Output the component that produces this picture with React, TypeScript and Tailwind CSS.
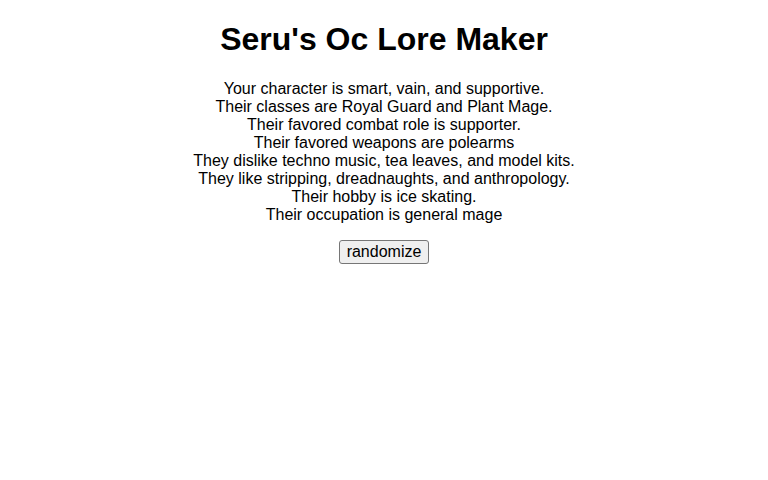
import { useState } from "react";

const lines = [
  "Your character is smart, vain, and supportive.",
  "Their classes are Royal Guard and Plant Mage.",
  "Their favored combat role is supporter.",
  "Their favored weapons are polearms",
  "They dislike techno music, tea leaves, and model kits.",
  "They like stripping, dreadnaughts, and anthropology.",
  "Their hobby is ice skating.",
  "Their occupation is general mage",
];

export default function App() {
  const [text] = useState(lines);
  return (
    <div className="min-h-[480px] bg-white text-black text-center font-['Liberation_Sans',Arial,sans-serif]">
      <h1 className="pt-[21px] text-[32px] leading-[37px] font-bold">Seru's Oc Lore Maker</h1>
      <div className="mt-[22px] text-[16px] leading-[18px]">
        {text.map((l) => (
          <div key={l}>{l}</div>
        ))}
      </div>
      <div className="mt-[16px]">
        <button className="h-[24px] px-[7px] text-[16px] leading-[18px] bg-[#efefef] border border-[#767676] rounded-[3px] hover:bg-[#e5e5e5]">
          randomize
        </button>
      </div>
    </div>
  );
}
